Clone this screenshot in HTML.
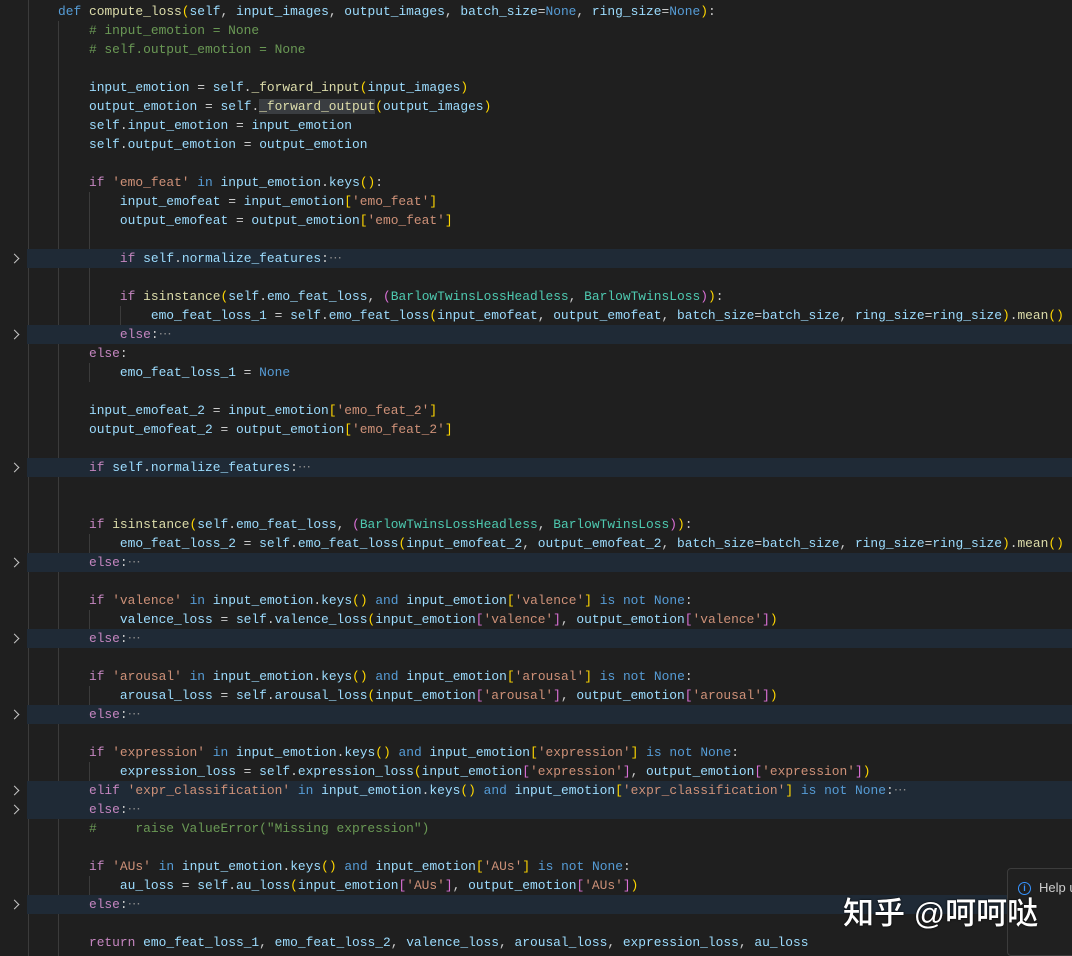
<!DOCTYPE html>
<html><head><meta charset="utf-8"><style>
body{margin:0;width:1072px;height:956px;background:#1f1f1f;overflow:hidden;position:relative;font-family:"Liberation Mono",monospace;font-size:12.9px;color:#cccccc}
.l{position:absolute;left:58px;height:19px;line-height:19px;white-space:pre}
.h{position:absolute;left:27px;right:0;height:19px;background:#1f2a36}
.g{position:absolute;width:1px;background:#3b3b3b}
.ch{position:absolute;left:11px;width:6px;height:6px;border-right:1.5px solid #c5c5c5;border-top:1.5px solid #c5c5c5;transform:rotate(45deg)}
.k{color:#569cd6}.c{color:#c586c0}.f{color:#dcdcaa}.v{color:#9cdcfe}.s{color:#ce9178}.m{color:#6a9955}.t{color:#4ec9b0}.y{color:#ffd700}.p{color:#da70d6}.b{color:#179fff}.e{color:#8c8c8c}
</style></head><body>
<div class="g" style="left:28px;top:0;height:956px"></div>
<div class="g" style="left:58px;top:21px;height:935px"></div>
<div class="g" style="left:89px;top:192px;height:152px"></div>
<div class="g" style="left:89px;top:363px;height:19px"></div>
<div class="g" style="left:89px;top:534px;height:19px"></div>
<div class="g" style="left:89px;top:610px;height:19px"></div>
<div class="g" style="left:89px;top:686px;height:19px"></div>
<div class="g" style="left:89px;top:762px;height:19px"></div>
<div class="g" style="left:89px;top:876px;height:19px"></div>
<div class="g" style="left:120px;top:306px;height:19px"></div>

<div class="h" style="top:249px"></div><div class="ch" style="top:255px"></div>
<div class="h" style="top:325px"></div><div class="ch" style="top:331px"></div>
<div class="h" style="top:458px"></div><div class="ch" style="top:464px"></div>
<div class="h" style="top:553px"></div><div class="ch" style="top:559px"></div>
<div class="h" style="top:629px"></div><div class="ch" style="top:635px"></div>
<div class="h" style="top:705px"></div><div class="ch" style="top:711px"></div>
<div class="h" style="top:781px;height:38px"></div><div class="ch" style="top:787px"></div><div class="ch" style="top:806px"></div>
<div class="h" style="top:895px"></div><div class="ch" style="top:901px"></div>

<div class="l" style="top:2px"><span class="k">def</span> <span class="f">compute_loss</span><span class="y">(</span><span class="v">self</span>, <span class="v">input_images</span>, <span class="v">output_images</span>, <span class="v">batch_size</span>=<span class="k">None</span>, <span class="v">ring_size</span>=<span class="k">None</span><span class="y">)</span>:</div>
<div class="l m" style="top:21px">    # input_emotion = None</div>
<div class="l m" style="top:40px">    # self.output_emotion = None</div>
<div class="l" style="top:78px">    <span class="v">input_emotion</span> = <span class="v">self</span>.<span class="f">_forward_input</span><span class="y">(</span><span class="v">input_images</span><span class="y">)</span></div>
<div class="l" style="top:97px">    <span class="v">output_emotion</span> = <span class="v">self</span>.<span class="f" style="background:#3a3d41">_forward_output</span><span class="y">(</span><span class="v">output_images</span><span class="y">)</span></div>
<div class="l" style="top:116px">    <span class="v">self</span>.<span class="v">input_emotion</span> = <span class="v">input_emotion</span></div>
<div class="l" style="top:135px">    <span class="v">self</span>.<span class="v">output_emotion</span> = <span class="v">output_emotion</span></div>
<div class="l" style="top:173px">    <span class="c">if</span> <span class="s">'emo_feat'</span> <span class="k">in</span> <span class="v">input_emotion</span>.<span class="v">keys</span><span class="y">()</span>:</div>
<div class="l" style="top:192px">        <span class="v">input_emofeat</span> = <span class="v">input_emotion</span><span class="y">[</span><span class="s">'emo_feat'</span><span class="y">]</span></div>
<div class="l" style="top:211px">        <span class="v">output_emofeat</span> = <span class="v">output_emotion</span><span class="y">[</span><span class="s">'emo_feat'</span><span class="y">]</span></div>
<div class="l" style="top:249px">        <span class="c">if</span> <span class="v">self</span>.<span class="v">normalize_features</span>:<span class="e">⋯</span></div>
<div class="l" style="top:287px">        <span class="c">if</span> <span class="f">isinstance</span><span class="y">(</span><span class="v">self</span>.<span class="v">emo_feat_loss</span>, <span class="p">(</span><span class="t">BarlowTwinsLossHeadless</span>, <span class="t">BarlowTwinsLoss</span><span class="p">)</span><span class="y">)</span>:</div>
<div class="l" style="top:306px">            <span class="v">emo_feat_loss_1</span> = <span class="v">self</span>.<span class="v">emo_feat_loss</span><span class="y">(</span><span class="v">input_emofeat</span>, <span class="v">output_emofeat</span>, <span class="v">batch_size</span>=<span class="v">batch_size</span>, <span class="v">ring_size</span>=<span class="v">ring_size</span><span class="y">)</span>.<span class="f">mean</span><span class="y">()</span></div>
<div class="l" style="top:325px">        <span class="c">else</span>:<span class="e">⋯</span></div>
<div class="l" style="top:344px">    <span class="c">else</span>:</div>
<div class="l" style="top:363px">        <span class="v">emo_feat_loss_1</span> = <span class="k">None</span></div>
<div class="l" style="top:401px">    <span class="v">input_emofeat_2</span> = <span class="v">input_emotion</span><span class="y">[</span><span class="s">'emo_feat_2'</span><span class="y">]</span></div>
<div class="l" style="top:420px">    <span class="v">output_emofeat_2</span> = <span class="v">output_emotion</span><span class="y">[</span><span class="s">'emo_feat_2'</span><span class="y">]</span></div>
<div class="l" style="top:458px">    <span class="c">if</span> <span class="v">self</span>.<span class="v">normalize_features</span>:<span class="e">⋯</span></div>
<div class="l" style="top:515px">    <span class="c">if</span> <span class="f">isinstance</span><span class="y">(</span><span class="v">self</span>.<span class="v">emo_feat_loss</span>, <span class="p">(</span><span class="t">BarlowTwinsLossHeadless</span>, <span class="t">BarlowTwinsLoss</span><span class="p">)</span><span class="y">)</span>:</div>
<div class="l" style="top:534px">        <span class="v">emo_feat_loss_2</span> = <span class="v">self</span>.<span class="v">emo_feat_loss</span><span class="y">(</span><span class="v">input_emofeat_2</span>, <span class="v">output_emofeat_2</span>, <span class="v">batch_size</span>=<span class="v">batch_size</span>, <span class="v">ring_size</span>=<span class="v">ring_size</span><span class="y">)</span>.<span class="f">mean</span><span class="y">()</span></div>
<div class="l" style="top:553px">    <span class="c">else</span>:<span class="e">⋯</span></div>
<div class="l" style="top:591px">    <span class="c">if</span> <span class="s">'valence'</span> <span class="k">in</span> <span class="v">input_emotion</span>.<span class="v">keys</span><span class="y">()</span> <span class="k">and</span> <span class="v">input_emotion</span><span class="y">[</span><span class="s">'valence'</span><span class="y">]</span> <span class="k">is not</span> <span class="k">None</span>:</div>
<div class="l" style="top:610px">        <span class="v">valence_loss</span> = <span class="v">self</span>.<span class="v">valence_loss</span><span class="y">(</span><span class="v">input_emotion</span><span class="p">[</span><span class="s">'valence'</span><span class="p">]</span>, <span class="v">output_emotion</span><span class="p">[</span><span class="s">'valence'</span><span class="p">]</span><span class="y">)</span></div>
<div class="l" style="top:629px">    <span class="c">else</span>:<span class="e">⋯</span></div>
<div class="l" style="top:667px">    <span class="c">if</span> <span class="s">'arousal'</span> <span class="k">in</span> <span class="v">input_emotion</span>.<span class="v">keys</span><span class="y">()</span> <span class="k">and</span> <span class="v">input_emotion</span><span class="y">[</span><span class="s">'arousal'</span><span class="y">]</span> <span class="k">is not</span> <span class="k">None</span>:</div>
<div class="l" style="top:686px">        <span class="v">arousal_loss</span> = <span class="v">self</span>.<span class="v">arousal_loss</span><span class="y">(</span><span class="v">input_emotion</span><span class="p">[</span><span class="s">'arousal'</span><span class="p">]</span>, <span class="v">output_emotion</span><span class="p">[</span><span class="s">'arousal'</span><span class="p">]</span><span class="y">)</span></div>
<div class="l" style="top:705px">    <span class="c">else</span>:<span class="e">⋯</span></div>
<div class="l" style="top:743px">    <span class="c">if</span> <span class="s">'expression'</span> <span class="k">in</span> <span class="v">input_emotion</span>.<span class="v">keys</span><span class="y">()</span> <span class="k">and</span> <span class="v">input_emotion</span><span class="y">[</span><span class="s">'expression'</span><span class="y">]</span> <span class="k">is not</span> <span class="k">None</span>:</div>
<div class="l" style="top:762px">        <span class="v">expression_loss</span> = <span class="v">self</span>.<span class="v">expression_loss</span><span class="y">(</span><span class="v">input_emotion</span><span class="p">[</span><span class="s">'expression'</span><span class="p">]</span>, <span class="v">output_emotion</span><span class="p">[</span><span class="s">'expression'</span><span class="p">]</span><span class="y">)</span></div>
<div class="l" style="top:781px">    <span class="c">elif</span> <span class="s">'expr_classification'</span> <span class="k">in</span> <span class="v">input_emotion</span>.<span class="v">keys</span><span class="y">()</span> <span class="k">and</span> <span class="v">input_emotion</span><span class="y">[</span><span class="s">'expr_classification'</span><span class="y">]</span> <span class="k">is not</span> <span class="k">None</span>:<span class="e">⋯</span></div>
<div class="l" style="top:800px">    <span class="c">else</span>:<span class="e">⋯</span></div>
<div class="l m" style="top:819px">    #     raise ValueError("Missing expression")</div>
<div class="l" style="top:857px">    <span class="c">if</span> <span class="s">'AUs'</span> <span class="k">in</span> <span class="v">input_emotion</span>.<span class="v">keys</span><span class="y">()</span> <span class="k">and</span> <span class="v">input_emotion</span><span class="y">[</span><span class="s">'AUs'</span><span class="y">]</span> <span class="k">is not</span> <span class="k">None</span>:</div>
<div class="l" style="top:876px">        <span class="v">au_loss</span> = <span class="v">self</span>.<span class="v">au_loss</span><span class="y">(</span><span class="v">input_emotion</span><span class="p">[</span><span class="s">'AUs'</span><span class="p">]</span>, <span class="v">output_emotion</span><span class="p">[</span><span class="s">'AUs'</span><span class="p">]</span><span class="y">)</span></div>
<div class="l" style="top:895px">    <span class="c">else</span>:<span class="e">⋯</span></div>
<div class="l" style="top:933px">    <span class="c">return</span> <span class="v">emo_feat_loss_1</span>, <span class="v">emo_feat_loss_2</span>, <span class="v">valence_loss</span>, <span class="v">arousal_loss</span>, <span class="v">expression_loss</span>, <span class="v">au_loss</span></div>

<div style="position:absolute;left:1007px;top:868px;width:80px;height:86px;background:#202020;border:1px solid #3c3c3c;border-radius:4px;overflow:hidden">
<div style="position:absolute;left:10px;top:13px;width:13px;height:13px;border:1.5px solid #3794ff;border-radius:50%;box-sizing:border-box;color:#3794ff;font:bold 9px 'Liberation Sans',sans-serif;text-align:center;line-height:10px">i</div>
<div style="position:absolute;left:31px;top:11px;font:13px 'Liberation Sans',sans-serif;color:#cccccc;white-space:nowrap">Help u</div>
</div>
<div style="position:absolute;left:843px;top:888px;font:31px 'Liberation Sans','Noto Sans CJK SC',sans-serif;font-weight:500;color:#fff;white-space:nowrap;text-shadow:0 0 2px #000">知乎 @呵呵哒</div>
</body></html>
